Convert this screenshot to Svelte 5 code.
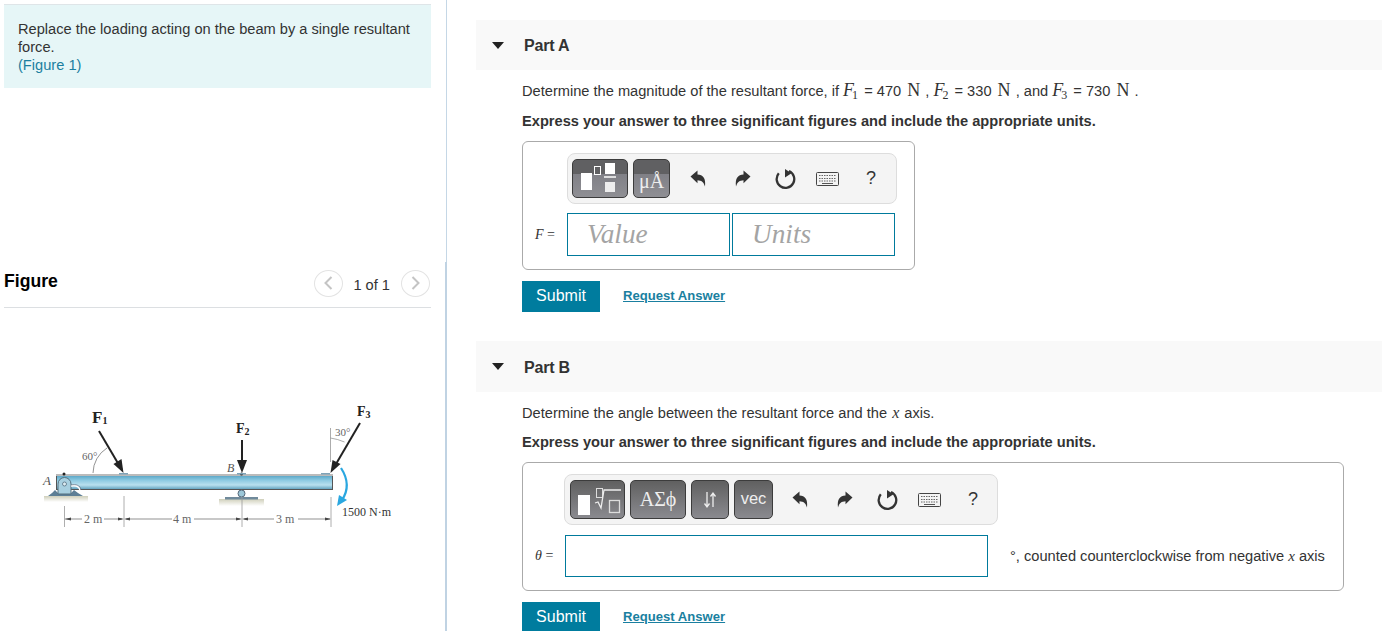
{#snippet tools()}
  <div class="tools">
    <svg class="tool" width="20" height="20" viewBox="0 0 20 20"><path d="M1.500 7.500 8.500 1.500v4c5.500.3 8.500 3.500 7.500 12-1.500-4.500-3.500-6-7.500-6.200v3z" fill="#333"/></svg>
    <svg class="tool" width="20" height="20" viewBox="0 0 20 20"><path d="M18.500 7.500 11.500 1.500v4c-5.500.3-8.500 3.500-7.500 12 1.500-4.500 3.500-6 7.500-6.200v3z" fill="#333"/></svg>
    <svg class="tool" width="22" height="24" viewBox="0 0 22 24"><path d="M15 4A8.800 8.800 0 1 1 4.800 6.300" fill="none" stroke="#333" stroke-width="2.300"/><path d="M11 2v8.500l6.500-4.200z" fill="#333"/></svg>
    <svg class="tool kb" width="23" height="14" viewBox="0 0 23 14"><rect x=".5" y=".5" width="22" height="13" rx="1" fill="#f4f4f4" stroke="#444"/><path d="M3 3.500h17M3 6.500h17M3 9h17" stroke="#666" stroke-width="1.200" stroke-dasharray="1.500 1"/><path d="M6 11.500h11" stroke="#555"/></svg>
    <span class="help">?</span>
  </div>
{/snippet}

<div class="page">
  <aside class="left">
    <div class="intro">
      Replace the loading acting on the beam by a single resultant force.<br />
      <span class="link">(Figure 1)</span>
    </div>
    <div class="fighead">
      <h2>Figure</h2>
      <div class="pager">
        <span class="circle"><svg width="9" height="14" viewBox="0 0 9 14"><path d="M7.500 1 1.500 7l6 6" fill="none" stroke="#c4c4c4" stroke-width="2"/></svg></span>
        <span class="count">1 of 1</span>
        <span class="circle"><svg width="9" height="14" viewBox="0 0 9 14"><path d="M1.500 1l6 6-6 6" fill="none" stroke="#c4c4c4" stroke-width="2"/></svg></span>
      </div>
    </div>
    <svg class="beam" width="420" height="150" viewBox="0 0 420 150">
      <defs>
        <linearGradient id="bg" x1="0" x2="0" y1="0" y2="1">
          <stop offset="0" stop-color="#4d9dc0"/><stop offset=".4" stop-color="#8fcbe2"/><stop offset=".7" stop-color="#b9e0ee"/><stop offset="1" stop-color="#5a9dba"/>
        </linearGradient>
        <linearGradient id="gnd" x1="0" x2="0" y1="0" y2="1"><stop offset="0" stop-color="#cfcfba"/><stop offset="1" stop-color="#fff"/></linearGradient>
        <filter id="soft"><feGaussianBlur stdDeviation=".45"/></filter>
      </defs>
      <g filter="url(#soft)">
        <rect x="44" y="106" width="44" height="6" fill="url(#gnd)"/>
        <rect x="219" y="109" width="45" height="7" fill="url(#gnd)"/>
        <rect x="56.500" y="84.500" width="276" height="15" fill="url(#bg)" stroke="#555"/>
        <rect x="56" y="84" width="277" height="2" fill="#bbb"/>
        <path d="M48 106l4-3 3-3 3 3h13l3-3 4 3 5 3z" fill="#5d7f96"/>
        <path d="M58 104V94a6.500 6.500 0 0 1 13 0V104z" fill="#a8d0e0" stroke="#55707f"/>
        <circle cx="64.500" cy="94" r="2" fill="#dcecf2" stroke="#55707f" stroke-width=".8"/>
        <path d="M71 96c5-1 8 0 9 4" fill="none" stroke="#fff" stroke-width="1.600"/>
        <path d="M71 95c5-1 9 0 10 5" fill="none" stroke="#556" stroke-width=".6"/>
        <circle cx="64" cy="84" r="1.500" fill="#222"/>
        <circle cx="241.500" cy="84" r="1.500" fill="#222"/>
        <circle cx="241.500" cy="103.500" r="3.500" fill="#9cc7d8" stroke="#567"/>
        <rect x="225" y="107" width="33" height="2.500" fill="#6f8a9b"/>
        <rect x="119" y="83" width="9" height="1.500" fill="#7fa3b8"/>
        <rect x="321" y="83" width="9" height="1.500" fill="#7fa3b8"/>
        <rect x="237" y="83" width="9" height="1.500" fill="#7fa3b8"/>

        <path d="M99 41 119 75" stroke="#222" stroke-width="2"/><path d="M123.500 83 113.500 74 121.500 69z" fill="#222"/>
        <path d="M242 50V73" stroke="#222" stroke-width="2"/><path d="M242 83 237 70h10z" fill="#222"/>
        <path d="M360 33 336 74" stroke="#222" stroke-width="2"/><path d="M330.500 83 332.500 70 340.500 74z" fill="#222"/>
        <path d="M341 78Q352 95 342 110" fill="none" stroke="#2aa7e0" stroke-width="2.200"/><path d="M337 116 339 105 347 110z" fill="#2aa7e0"/>
        <path d="M93 83a30 30 0 0 1 14-25" fill="none" stroke="#666" stroke-width=".7"/>
        <path d="M330.500 38V72M330.500 48q7 1 14 4" fill="none" stroke="#888" stroke-width=".7"/>
        <path d="M64.500 116V137M124 106V137M242 107V137M331 107V137" stroke="#999" stroke-width=".8"/>
        <path d="M65 129H82M104 129H122M126 129H172M194 129H240M244 129H274M298 129H330" stroke="#666" stroke-width=".7"/>
        <path d="M65 129l6-1.500v3zM124 129l-6-1.500v3zM124 129l6-1.500v3zM242 129l-6-1.500v3zM242 129l6-1.500v3zM331 129l-6-1.500v3z" fill="#444"/>
      </g>
      <g class="ft">
        <text x="92" y="33" class="bf">F<tspan class="sub" dy="1">1</tspan></text>
        <text x="236" y="43" class="bf sm">F<tspan class="sub" dy="2">2</tspan></text>
        <text x="357" y="26" class="bf sm">F<tspan class="sub" dy="2">3</tspan></text>
        <text x="82" y="70" class="lb">60°</text>
        <text x="335" y="46" class="lb">30°</text>
        <text x="43" y="95" class="it">A</text>
        <text x="227" y="82" class="it sm2">B</text>
        <text x="84" y="133" class="lb l2">2 m</text>
        <text x="173" y="133" class="lb l2">4 m</text>
        <text x="276" y="133" class="lb l2">3 m</text>
        <text x="342" y="126" class="lb l3">1500 N·m</text>
      </g>
    </svg>
  </aside>

  <main class="right">
    <section class="part">
      <header class="phead"><span class="tri"></span><h3>Part A</h3></header>
      <div class="body">
        <p class="q">Determine the magnitude of the resultant force, if <i class="m">F<sub>1</sub></i> = 470 <span class="u">N</span> , <i class="m">F<sub>2</sub></i> = 330 <span class="u">N</span> , and <i class="m">F<sub>3</sub></i> = 730 <span class="u">N</span> .</p>
        <p class="ex">Express your answer to three significant figures and include the appropriate units.</p>
        <div class="box boxa">
          <div class="toolbar tba">
            <span class="btn tpl">
              <svg width="44" height="34" viewBox="0 0 44 34"><rect x="3" y="11" width="11" height="17" fill="#fff"/><rect x="16.500" y="4.500" width="6" height="8" fill="none" stroke="#fff"/><rect x="27" y="1" width="10" height="11" fill="#fff"/><rect x="26" y="14" width="12" height="2" fill="#ddd"/><rect x="27" y="20" width="10" height="10" fill="#eee"/></svg>
            </span>
            <span class="btn mu"><span class="gl">μÅ</span></span>
            {@render tools()}
          </div>
          <div class="row">
            <span class="lbl"><i>F</i> =</span>
            <span class="inp ph w1">Value</span>
            <span class="inp ph w1">Units</span>
          </div>
        </div>
        <div class="actions"><span class="submit">Submit</span><span class="req">Request Answer</span></div>
      </div>
    </section>
    <section class="part partb">
      <header class="phead"><span class="tri"></span><h3>Part B</h3></header>
      <div class="body">
        <p class="q">Determine the angle between the resultant force and the <i class="mx">x</i> axis.</p>
        <p class="ex exb">Express your answer to three significant figures and include the appropriate units.</p>
        <div class="box boxb">
          <div class="toolbar tbb">
            <span class="btn tpl2">
              <svg width="50" height="32" viewBox="0 0 50 32"><rect x="5" y="11" width="12" height="20" fill="#fff"/><rect x="23.500" y="4.500" width="6" height="9" fill="none" stroke="#ddd"/><path d="M22 19l3-1 3 6 3-18h17" fill="none" stroke="#eee" stroke-width="1.300"/><rect x="36.500" y="16.500" width="10" height="12" fill="none" stroke="#ddd" stroke-width="1.300"/></svg>
            </span>
            <span class="btn sym"><span class="gl">ΑΣϕ</span></span>
            <span class="btn arr"><svg width="18" height="18" viewBox="0 0 18 18"><path d="M6 1v15M3.500 12.500 6 16l2.500-3.500M12 16V2M9.500 5.500 12 2l2.500 3.500" fill="none" stroke="#eee" stroke-width="1.300"/></svg></span>
            <span class="btn vec">vec</span>
            {@render tools()}
          </div>
          <div class="row rowb">
            <span class="lbl"><i>θ</i> =</span>
            <span class="inp wide"></span>
            <span class="suffix">°, counted counterclockwise from negative <i class="mx sx">x</i> axis</span>
          </div>
        </div>
        <div class="actions"><span class="submit">Submit</span><span class="req">Request Answer</span></div>
      </div>
    </section>
  </main>
</div>

<style>
  :global(body) { margin: 0; background: #fff; }
  .page { display: flex; width: 1382px; height: 631px; overflow: hidden; font-family: "Liberation Sans", Arial, sans-serif; color: #333; font-size: 14.63px; }
  .left { position: relative; width: 447px; flex: none; box-sizing: border-box; padding: 4px 15px 0 4px; border-right: 1px solid #c5d7e6; }
  .left::after { content: ""; position: absolute; left: 445px; top: 262px; bottom: 0; width: 2px; background: #c0d3e3; }
  .intro { height: 84px; box-sizing: border-box; padding: 15px 14px 0; background: #e6f6f7; border-top: 1px solid #dfe5e8; line-height: 18px; }
  .link { color: #1a7fa0; }
  .fighead { display: flex; justify-content: space-between; align-items: center; height: 46px; margin-top: 174px; border-bottom: 1px solid #dcdfe2; box-sizing: border-box; padding-bottom: 3px; }
  h2 { margin: 0 0 4px; font-size: 17.6px; font-weight: 700; color: #000; }
  .pager { display: flex; align-items: center; gap: 11px; margin-right: 1px; }
  .count { padding-top: 3px; margin-left: -1px; }
  .circle { width: 29px; height: 27px; border: 1px solid #e3e3e3; border-radius: 50%; display: flex; align-items: center; justify-content: center; box-sizing: border-box; }
  .beam { display: block; margin: 82px 0 0 -4px; }
  .ft text { font-family: "Liberation Serif", serif; fill: #444; }
  .bf { font-weight: 700; font-size: 17px; fill: #222 !important; }
  .bf.sm { font-size: 14px; }
  .sub { font-size: 10px; }
  .lb { font-size: 11px; fill: #666 !important; }
  .l2 { font-size: 12px; }
  .l3 { font-size: 12px; fill: #333 !important; }
  .it { font-style: italic; font-size: 13px; fill: #555 !important; }
  .sm2 { font-size: 12px; }

  .right { flex: 1; min-width: 0; padding: 20px 0 0 29px; }
  .phead { display: flex; align-items: center; height: 50px; background: #f9f9f9; }
  .partb { margin-top: 29px; }
  .partb .phead { height: 51px; }
  .tri { width: 0; height: 0; margin-left: 16px; border-left: 6px solid transparent; border-right: 6px solid transparent; border-top: 7px solid #222; }
  h3 { margin: 2px 0 0 20px; font-size: 16px; font-weight: 700; color: #333; letter-spacing: -.2px; }
  .partb h3 { margin-top: 3px; }
  .body { padding-left: 46px; }
  p { margin: 0; }
  .q { padding-top: 11px; line-height: 20px; height: 20px; white-space: nowrap; }
  .ex { font-weight: 700; margin-top: 10px; line-height: 20px; }
  .exb { margin-top: 9px; }
  .m { font-family: "Liberation Serif", serif; font-size: 18px; line-height: 0; margin-right: 2px; }
  .m sub { font-size: 12px; font-style: normal; line-height: 0; vertical-align: -3px; margin-left: -2px; }
  .mx { font-family: "Liberation Serif", serif; font-size: 16px; margin: 0 1px; line-height: 0; }
  .sx { margin: 0; font-size: 15px; }
  .u { font-family: "Liberation Serif", serif; font-size: 18px; line-height: 0; margin: 0 1px 0 2px; }
  .box { border: 1px solid #aaa; border-radius: 6px; margin-top: 10px; box-sizing: border-box; }
  .boxa { width: 393px; height: 129px; padding: 11px 0 0 44px; }
  .boxb { width: 822px; height: 129px; padding: 11px 0 0 41px; }
  .toolbar { display: flex; align-items: center; background: #f4f4f4; border: 1px solid #ddd; border-radius: 8px; height: 51px; box-sizing: border-box; gap: 5px; }
  .tba { width: 330px; padding-left: 4px; }
  .tbb { width: 434px; padding-left: 5px; }
  .btn { height: 39px; box-sizing: border-box; border: 1px solid #3c3c3c; border-radius: 5px; background: linear-gradient(#606062 0 38%, #808086 38%, #8f8f94); display: flex; align-items: center; justify-content: center; color: #eee; flex: none; }
  .tbb .btn { background: linear-gradient(#606060, #8a8a8f); }
  .tpl { width: 56px; }
  .mu { width: 37px; }
  .gl { font-family: "Liberation Serif", serif; font-size: 20px; }
  .mu .gl { padding-top: 5px; }
  .tpl2 { width: 55px; }
  .sym { width: 56px; }
  .arr { width: 38px; }
  .vec { width: 39px; font-size: 16.500px; padding-bottom: 2px; }
  .tools { display: flex; align-items: center; }
  .tool { flex: none; }
  .tba .tools { margin-left: 14px; }
  .tbb .tools { margin-left: 13px; }
  .tools .tool:nth-child(2) { margin-left: 23px; }
  .tools .tool:nth-child(3) { margin-left: 22px; }
  .tools .kb { margin-left: 20px; }
  .help { font-size: 18px; margin-left: 27px; color: #333; }
  .row { display: flex; align-items: center; margin-top: 9px; gap: 2px; }
  .rowb { margin-top: 10px; }
  .lbl { width: 44px; margin: 0 -2px 0 -44px; padding-left: 12px; box-sizing: border-box; font-family: "Liberation Serif", serif; font-size: 14px; flex: none; }
  .boxb .lbl { width: 41px; margin: 0 -1px 0 -41px; }
  .inp { display: block; height: 43px; box-sizing: border-box; border: 1px solid #007a9c; background: #fff; }
  .ph { font-family: "Liberation Serif", serif; font-style: italic; font-size: 27.300px; color: #a4a4a4; line-height: 40px; padding-left: 19px; }
  .w1 { width: 163px; }
  .wide { width: 423px; height: 42px; }
  .suffix { margin-left: 20px; white-space: nowrap; }
  .actions { display: flex; align-items: center; margin-top: 11px; }
  .submit { display: block; width: 78px; height: 31px; line-height: 29px; background: #007c9e; color: #fff; text-align: center; font-size: 16px; }
  .req { margin-left: 23px; padding-bottom: 3px; color: #1a7fa0; font-weight: 700; font-size: 13.100px; text-decoration: underline; }
</style>
